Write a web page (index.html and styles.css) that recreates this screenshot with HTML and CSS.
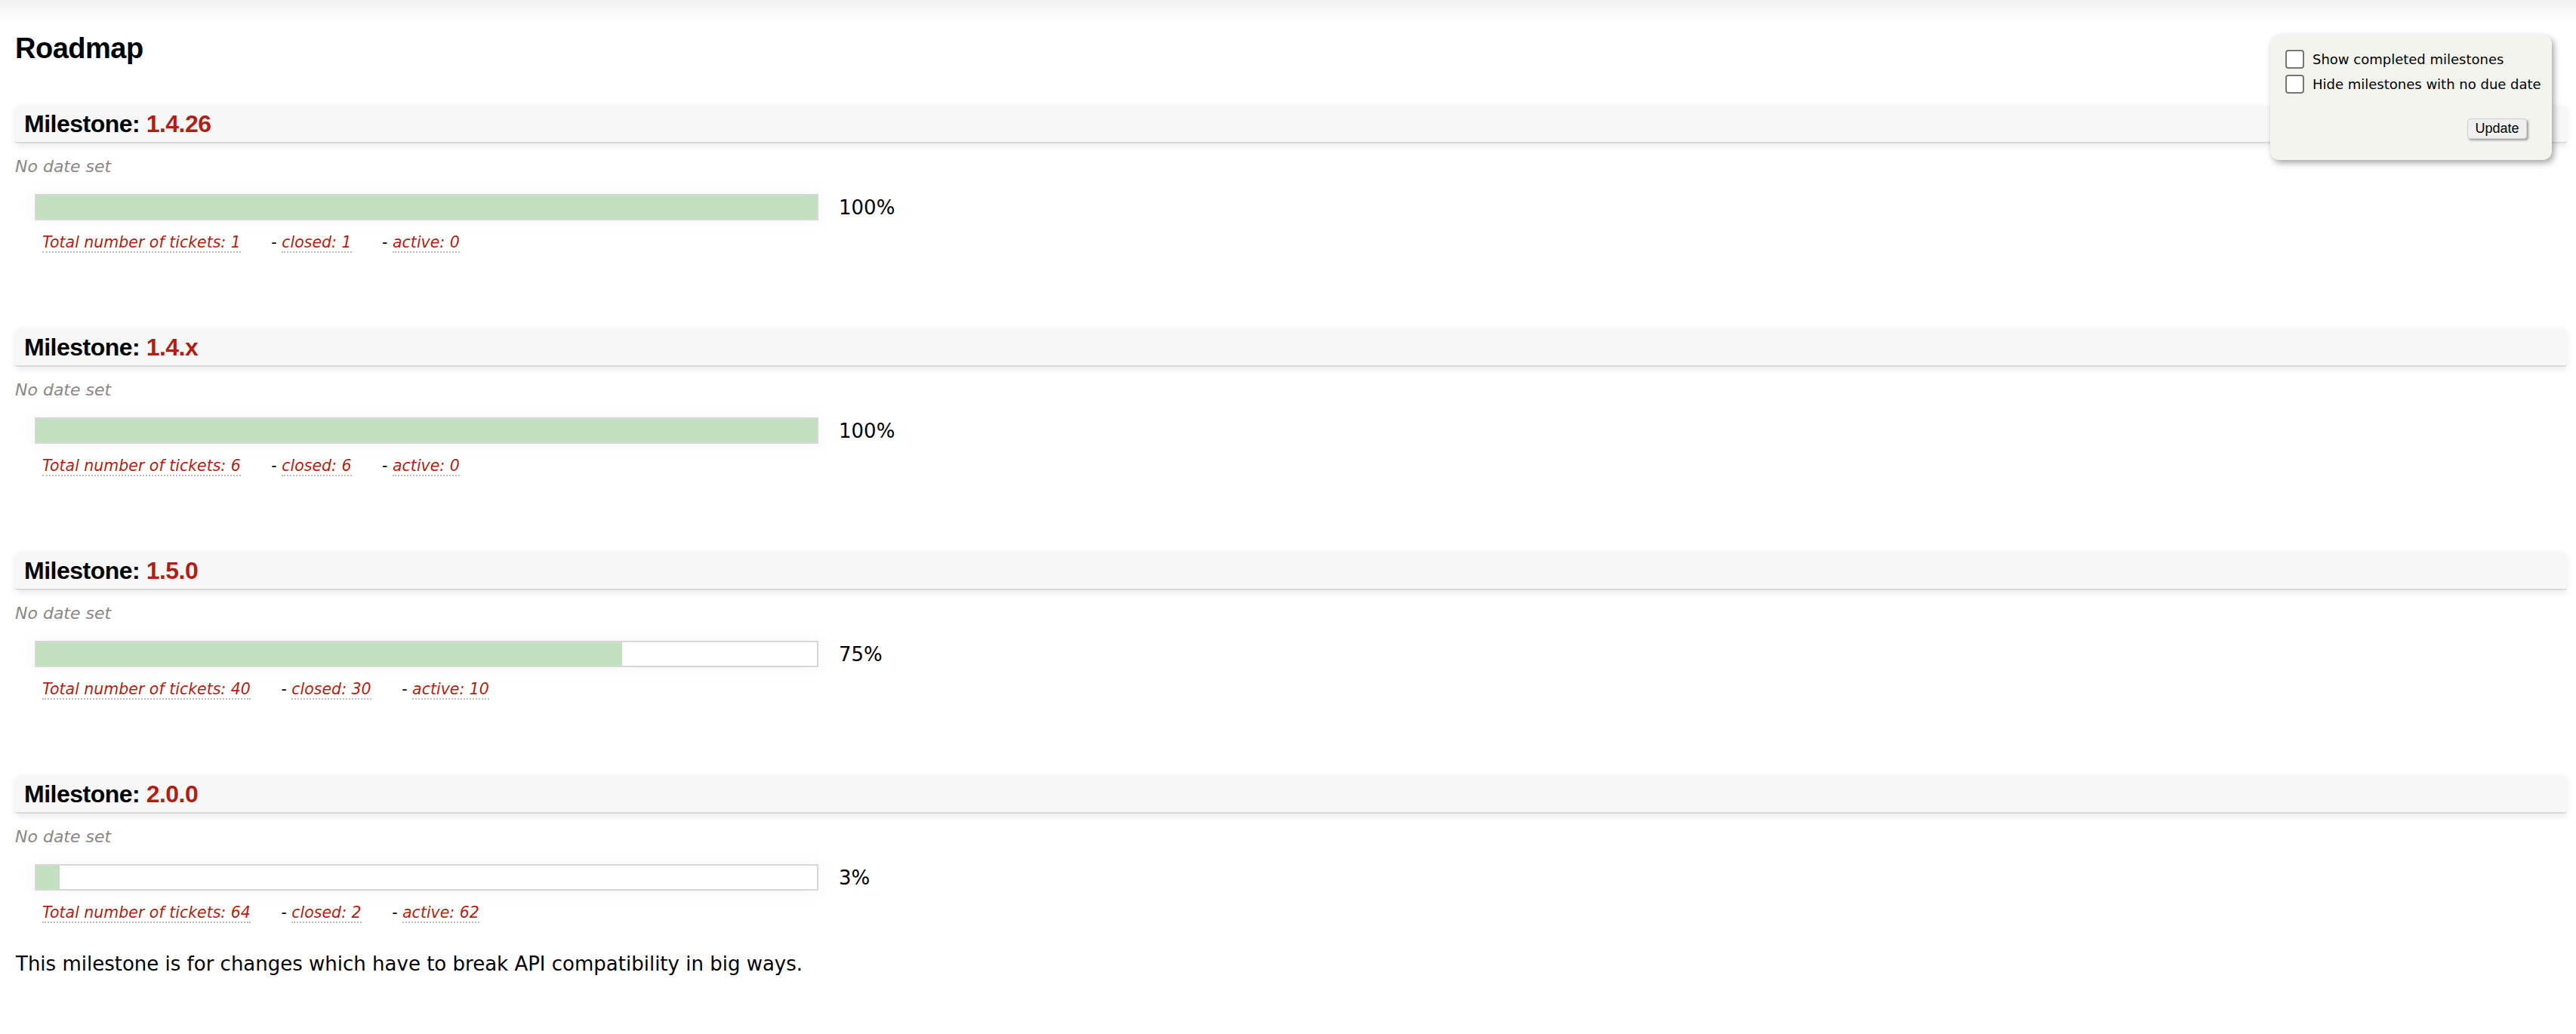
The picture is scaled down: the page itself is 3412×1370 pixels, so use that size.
FILE: index.html
```html
<!DOCTYPE html>
<html>
<head>
  <title>Roadmap</title>
  <link rel="stylesheet" href="styles.css">
</head>
<body>
  <div class="page">
    <h1>Roadmap</h1>

    <form class="prefs">
      <label class="pref"><input type="checkbox"> Show completed milestones</label>
      <label class="pref"><input type="checkbox"> Hide milestones with no due date</label>
      <div class="buttons">
        <button type="button" class="btn">Update</button>
      </div>
    </form>

    <div class="milestone">
      <h2 class="mtitle">Milestone: <a href="#">1.4.26</a></h2>
      <p class="date">No date set</p>
      <div class="progress-row">
        <div class="progress"><div class="closed" style="width: 100%;"></div></div>
        <span class="percent">100%</span>
      </div>
      <div class="stats">
        <a href="#">Total number of tickets: 1</a>
        <span class="part">- <a href="#">closed: 1</a></span>
        <span class="part">- <a href="#">active: 0</a></span>
      </div>
    </div>

    <div class="milestone">
      <h2 class="mtitle">Milestone: <a href="#">1.4.x</a></h2>
      <p class="date">No date set</p>
      <div class="progress-row">
        <div class="progress"><div class="closed" style="width: 100%;"></div></div>
        <span class="percent">100%</span>
      </div>
      <div class="stats">
        <a href="#">Total number of tickets: 6</a>
        <span class="part">- <a href="#">closed: 6</a></span>
        <span class="part">- <a href="#">active: 0</a></span>
      </div>
    </div>

    <div class="milestone">
      <h2 class="mtitle">Milestone: <a href="#">1.5.0</a></h2>
      <p class="date">No date set</p>
      <div class="progress-row">
        <div class="progress"><div class="closed" style="width: 75%;"></div></div>
        <span class="percent">75%</span>
      </div>
      <div class="stats">
        <a href="#">Total number of tickets: 40</a>
        <span class="part">- <a href="#">closed: 30</a></span>
        <span class="part">- <a href="#">active: 10</a></span>
      </div>
    </div>

    <div class="milestone">
      <h2 class="mtitle">Milestone: <a href="#">2.0.0</a></h2>
      <p class="date">No date set</p>
      <div class="progress-row">
        <div class="progress"><div class="closed" style="width: 3%;"></div></div>
        <span class="percent">3%</span>
      </div>
      <div class="stats">
        <a href="#">Total number of tickets: 64</a>
        <span class="part">- <a href="#">closed: 2</a></span>
        <span class="part">- <a href="#">active: 62</a></span>
      </div>
      <p class="description">This milestone is for changes which have to break API compatibility in big ways.</p>
    </div>
  </div>
</body>
</html>
```

FILE: styles.css
```css
body {
  margin: 0;
  background: #FFF linear-gradient(#F1F1F1, #FFF 30px) no-repeat;
  font-family: "DejaVu Sans", Verdana, sans-serif;
  color: #000;
}

.page {
  position: relative;
  padding: 42px 12px 0 20px;
}

h1 {
  margin: 0;
  font-family: "Liberation Sans", Arial, sans-serif;
  font-size: 38px;
  line-height: 44px;
  font-weight: bold;
  letter-spacing: -0.5px;
}

a {
  color: #AF1F15;
  text-decoration: none;
}

/* preferences box */
.prefs {
  position: absolute;
  top: 46px;
  right: 32px;
  width: 373px;
  height: 166px;
  box-sizing: border-box;
  padding: 20px 10px 0 20px;
  background-color: #F4F4EE;
  border-radius: 12px;
  box-shadow: 3px 4px 8px rgba(0, 0, 0, 0.35);
  display: flex;
  flex-direction: column;
  gap: 8px;
}

.pref {
  display: flex;
  align-items: center;
  gap: 11px;
  font-size: 18px;
  line-height: 25px;
  white-space: nowrap;
  color: #000;
}

.pref input {
  appearance: none;
  margin: 0;
  width: 25px;
  height: 25px;
  border: 2px solid #777;
  border-radius: 4px;
  background-color: #FFF;
  box-sizing: border-box;
}

.buttons {
  display: flex;
  justify-content: flex-end;
  margin: 25px 23px 0 0;
}

.btn {
  width: 79px;
  height: 27px;
  padding: 0;
  font-family: "Liberation Sans", Arial, sans-serif;
  font-size: 18px;
  color: #000;
  background-color: #EFEFEF;
  border: 1px solid #D0D0D0;
  border-radius: 4px;
  box-shadow: 2px 2px 3px rgba(0, 0, 0, 0.35);
}

/* milestones */
.milestone {
  margin-top: 54px;
}

.milestone + .milestone {
  margin-top: 103px;
}

.mtitle {
  margin: 0;
  height: 48px;
  padding: 0 12px;
  font-family: "Liberation Sans", Arial, sans-serif;
  font-size: 32px;
  line-height: 48px;
  font-weight: bold;
  letter-spacing: -0.5px;
  background-color: #F7F7F7;
  border-bottom: 2px solid #DADADA;
  border-radius: 4px;
  box-shadow: 0 3px 10px rgba(0, 0, 0, 0.09);
}

.date {
  margin: 18px 0 0;
  font-size: 22px;
  line-height: 26px;
  font-style: italic;
  color: #888;
}

.progress-row {
  display: flex;
  align-items: center;
  gap: 27px;
  margin: 23px 0 0 26px;
}

.progress {
  width: 1034px;
  height: 31px;
  border: 2px solid #D7D7D7;
  background-color: #FFF;
  box-shadow: 0 0 24px rgba(0, 0, 0, 0.05);
}

.progress .closed {
  height: 100%;
  background-color: #C2DFC0;
}

.percent {
  font-size: 26px;
  line-height: 32px;
}

.stats {
  margin: 17px 0 0 36px;
  font-size: 20.5px;
  line-height: 24px;
  font-style: italic;
  white-space: nowrap;
}

.stats a {
  border-bottom: 2px dotted #BBB;
}

.stats .part {
  margin-left: 34px;
  font-style: normal;
}

.stats .part a {
  font-style: italic;
}

.description {
  margin: 40px 0 0 1px;
  font-size: 26px;
  line-height: 32px;
}
```
